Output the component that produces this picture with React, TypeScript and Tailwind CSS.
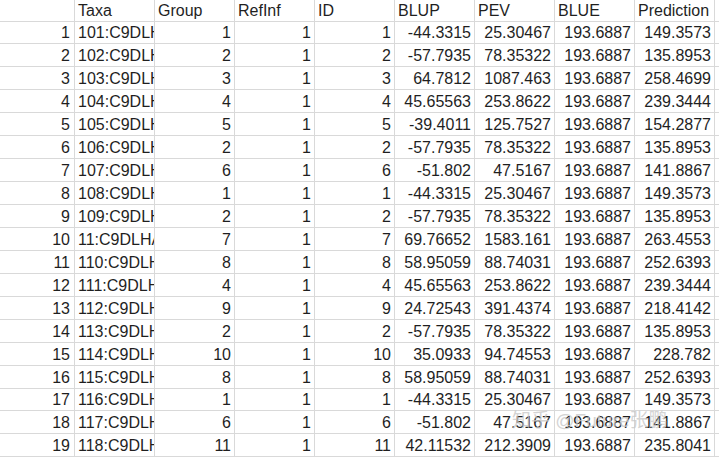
const headers = ["Taxa", "Group", "RefInf", "ID", "BLUP", "PEV", "BLUE", "Prediction"];

const rows: string[][] = [
  ["101:C9DLHA", "1", "1", "1", "-44.3315", "25.30467", "193.6887", "149.3573"],
  ["102:C9DLHA", "2", "1", "2", "-57.7935", "78.35322", "193.6887", "135.8953"],
  ["103:C9DLHA", "3", "1", "3", "64.7812", "1087.463", "193.6887", "258.4699"],
  ["104:C9DLHA", "4", "1", "4", "45.65563", "253.8622", "193.6887", "239.3444"],
  ["105:C9DLHA", "5", "1", "5", "-39.4011", "125.7527", "193.6887", "154.2877"],
  ["106:C9DLHA", "2", "1", "2", "-57.7935", "78.35322", "193.6887", "135.8953"],
  ["107:C9DLHA", "6", "1", "6", "-51.802", "47.5167", "193.6887", "141.8867"],
  ["108:C9DLHA", "1", "1", "1", "-44.3315", "25.30467", "193.6887", "149.3573"],
  ["109:C9DLHA", "2", "1", "2", "-57.7935", "78.35322", "193.6887", "135.8953"],
  ["11:C9DLHAC", "7", "1", "7", "69.76652", "1583.161", "193.6887", "263.4553"],
  ["110:C9DLHA", "8", "1", "8", "58.95059", "88.74031", "193.6887", "252.6393"],
  ["111:C9DLHA", "4", "1", "4", "45.65563", "253.8622", "193.6887", "239.3444"],
  ["112:C9DLHA", "9", "1", "9", "24.72543", "391.4374", "193.6887", "218.4142"],
  ["113:C9DLHA", "2", "1", "2", "-57.7935", "78.35322", "193.6887", "135.8953"],
  ["114:C9DLHA", "10", "1", "10", "35.0933", "94.74553", "193.6887", "228.782"],
  ["115:C9DLHA", "8", "1", "8", "58.95059", "88.74031", "193.6887", "252.6393"],
  ["116:C9DLHA", "1", "1", "1", "-44.3315", "25.30467", "193.6887", "149.3573"],
  ["117:C9DLHA", "6", "1", "6", "-51.802", "47.5167", "193.6887", "141.8867"],
  ["118:C9DLHA", "11", "1", "11", "42.11532", "212.3909", "193.6887", "235.8041"],
];

const cell = "w-[80px] shrink-0 border-r border-[#d9d9d9] overflow-hidden whitespace-nowrap px-[3px] pt-[2px] flex items-center";

export default function App() {
  return (
    <div
      className="relative w-[719px] h-[457px] overflow-hidden bg-white text-[16px] text-[#1f1f1f] leading-none"
      style={{ fontFamily: '"Liberation Sans", "Noto Sans CJK SC", sans-serif' }}
    >
      <div className="flex h-[21.5px] border-b border-[#d9d9d9]">
        <div className="w-[75px] shrink-0 border-r border-[#d9d9d9]" />
        {headers.map((h) => (
          <div key={h} className={cell}>
            {h}
          </div>
        ))}
      </div>

      {rows.map((r, i) => (
        <div key={i} className="flex h-[22.95px] border-b border-[#d9d9d9]">
          <div className="w-[75px] shrink-0 border-r border-[#d9d9d9] flex items-center justify-end pr-[4px] pt-[2px]">
            {i + 1}
          </div>
          {r.map((v, j) => (
            <div key={j} className={`${cell} ${j === 0 ? "justify-start" : "justify-end"}`}>
              {v}
            </div>
          ))}
        </div>
      ))}

      {/* watermark */}
      <div className="absolute left-[512px] top-[411px] text-[19px] text-[#c8c8c8]/80 whitespace-nowrap pointer-events-none">
        知乎 @Future张鹏
      </div>
    </div>
  );
}
